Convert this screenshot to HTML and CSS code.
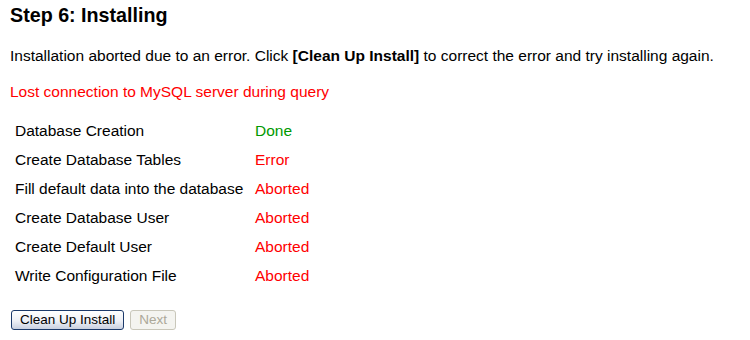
FILE: index.html
```html
<!DOCTYPE html>
<html>
<head>
<meta charset="utf-8">
<link rel="stylesheet" href="styles.css">
</head>
<body>
<div class="page">
  <h1 class="title">Step 6: Installing</h1>
  <p class="intro">Installation aborted due to an error. Click <b>[Clean Up Install]</b> to correct the error and try installing again.</p>
  <p class="errmsg">Lost connection to MySQL server during query</p>
  <div class="steps">
    <div class="label">Database Creation</div><div class="status done">Done</div>
    <div class="label">Create Database Tables</div><div class="status fail">Error</div>
    <div class="label">Fill default data into the database</div><div class="status fail">Aborted</div>
    <div class="label">Create Database User</div><div class="status fail">Aborted</div>
    <div class="label">Create Default User</div><div class="status fail">Aborted</div>
    <div class="label">Write Configuration File</div><div class="status fail">Aborted</div>
  </div>
  <div class="buttons">
    <button class="btn primary">Clean Up Install</button>
    <button class="btn disabled" disabled>Next</button>
  </div>
</div>
</body>
</html>
```
FILE: styles.css
```css
html, body {
  margin: 0;
  padding: 0;
  background: #ffffff;
}
body {
  font-family: "Liberation Sans", Arial, sans-serif;
  font-size: 15.5px;
  color: #000;
}
.page {
  padding: 3px 10px 0 10px;
}
.title {
  font-size: 19.7px;
  font-weight: bold;
  margin: 0;
  line-height: 24px;
}
.intro {
  margin: 20px 0 0 0;
  line-height: 18px;
}
.errmsg {
  margin: 18px 0 0 0;
  line-height: 18px;
  color: #ff0000;
}
.steps {
  margin-top: 15px;
  display: grid;
  grid-template-columns: 240px auto;
  grid-auto-rows: 29px;
  align-items: center;
  padding-left: 5px;
}
.status.done { color: #009900; }
.status.fail { color: #ff0000; }
.buttons {
  margin-top: 20px;
  display: flex;
  gap: 6px;
  padding-left: 1px;
}
.btn {
  font-family: "Liberation Sans", Arial, sans-serif;
  font-size: 13.5px;
  height: 20px;
  padding: 0 8px;
  border-radius: 3px;
  line-height: 16px;
}
.primary {
  border: 1px solid #1c3a6b;
  background: linear-gradient(#ffffff, #eef0f6 55%, #c9d0e0);
  color: #000;
}
.disabled {
  border: 1px solid #c9c7ba;
  background: #f4f4f0;
  color: #aca899;
}
```
